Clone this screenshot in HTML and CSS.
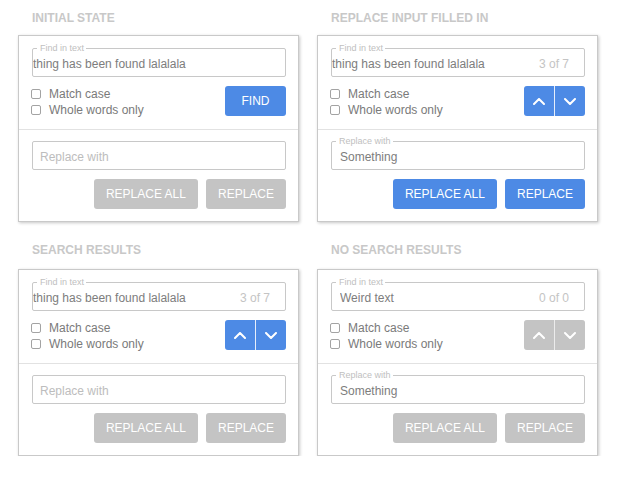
FILE: index.html
```html
<!DOCTYPE html>
<html lang="en">
<head>
<meta charset="utf-8">
<title>Find and replace states</title>
<link rel="stylesheet" href="styles.css">
</head>
<body>
<main class="board">
  <section class="state">
    <h2 class="state-title">INITIAL STATE</h2>
    <div class="card">
      <div class="card-find">
        <div class="field">
          <span class="field-label">Find in text</span>
          <span class="field-value field-value--clipped">thing has been found lalalala</span>
        </div>
        <div class="options">
          <ul class="checks">
            <li class="check"><span class="check-box"></span>Match case</li>
            <li class="check"><span class="check-box"></span>Whole words only</li>
          </ul>
          <button class="btn btn--primary btn--find">FIND</button>
        </div>
      </div>
      <div class="card-replace">
        <div class="field">
          <span class="field-placeholder">Replace with</span>
        </div>
        <div class="actions">
          <button class="btn btn--disabled">REPLACE ALL</button>
          <button class="btn btn--disabled">REPLACE</button>
        </div>
      </div>
    </div>
  </section>

  <section class="state">
    <h2 class="state-title">REPLACE INPUT FILLED IN</h2>
    <div class="card">
      <div class="card-find">
        <div class="field">
          <span class="field-label">Find in text</span>
          <span class="field-value field-value--clipped">thing has been found lalalala</span>
          <span class="field-count">3 of 7</span>
        </div>
        <div class="options">
          <ul class="checks">
            <li class="check"><span class="check-box"></span>Match case</li>
            <li class="check"><span class="check-box"></span>Whole words only</li>
          </ul>
          <div class="nav nav--primary">
            <button class="nav-btn" aria-label="Previous"><svg width="12" height="7" viewBox="0 0 12 7"><polyline points="1,6 6,1 11,6"/></svg></button>
            <button class="nav-btn" aria-label="Next"><svg width="12" height="7" viewBox="0 0 12 7"><polyline points="1,1 6,6 11,1"/></svg></button>
          </div>
        </div>
      </div>
      <div class="card-replace">
        <div class="field">
          <span class="field-label">Replace with</span>
          <span class="field-value">Something</span>
        </div>
        <div class="actions">
          <button class="btn btn--primary">REPLACE ALL</button>
          <button class="btn btn--primary">REPLACE</button>
        </div>
      </div>
    </div>
  </section>

  <section class="state state--lower">
    <h2 class="state-title">SEARCH RESULTS</h2>
    <div class="card">
      <div class="card-find">
        <div class="field">
          <span class="field-label">Find in text</span>
          <span class="field-value field-value--clipped">thing has been found lalalala</span>
          <span class="field-count">3 of 7</span>
        </div>
        <div class="options">
          <ul class="checks">
            <li class="check"><span class="check-box"></span>Match case</li>
            <li class="check"><span class="check-box"></span>Whole words only</li>
          </ul>
          <div class="nav nav--primary">
            <button class="nav-btn" aria-label="Previous"><svg width="12" height="7" viewBox="0 0 12 7"><polyline points="1,6 6,1 11,6"/></svg></button>
            <button class="nav-btn" aria-label="Next"><svg width="12" height="7" viewBox="0 0 12 7"><polyline points="1,1 6,6 11,1"/></svg></button>
          </div>
        </div>
      </div>
      <div class="card-replace">
        <div class="field">
          <span class="field-placeholder">Replace with</span>
        </div>
        <div class="actions">
          <button class="btn btn--disabled">REPLACE ALL</button>
          <button class="btn btn--disabled">REPLACE</button>
        </div>
      </div>
    </div>
  </section>

  <section class="state state--lower">
    <h2 class="state-title">NO SEARCH RESULTS</h2>
    <div class="card">
      <div class="card-find">
        <div class="field">
          <span class="field-label">Find in text</span>
          <span class="field-value">Weird text</span>
          <span class="field-count">0 of 0</span>
        </div>
        <div class="options">
          <ul class="checks">
            <li class="check"><span class="check-box"></span>Match case</li>
            <li class="check"><span class="check-box"></span>Whole words only</li>
          </ul>
          <div class="nav nav--disabled">
            <button class="nav-btn" aria-label="Previous"><svg width="12" height="7" viewBox="0 0 12 7"><polyline points="1,6 6,1 11,6"/></svg></button>
            <button class="nav-btn" aria-label="Next"><svg width="12" height="7" viewBox="0 0 12 7"><polyline points="1,1 6,6 11,1"/></svg></button>
          </div>
        </div>
      </div>
      <div class="card-replace">
        <div class="field">
          <span class="field-label">Replace with</span>
          <span class="field-value">Something</span>
        </div>
        <div class="actions">
          <button class="btn btn--disabled">REPLACE ALL</button>
          <button class="btn btn--disabled">REPLACE</button>
        </div>
      </div>
    </div>
  </section>
</main>
</body>
</html>
```
FILE: styles.css
```css
* { box-sizing: border-box; }

html, body {
  margin: 0;
  background: #ffffff;
}

body {
  font-family: "Liberation Sans", Arial, sans-serif;
  font-size: 12px;
  color: #7a7a7a;
}

.board {
  display: grid;
  grid-template-columns: 281px 281px;
  column-gap: 18px;
  row-gap: 20px;
  padding: 10px 0 0 18px;
}

.state-title {
  margin: 0 0 9px 14px;
  font-size: 12px;
  line-height: 16px;
  font-weight: bold;
  color: #c8c8c8;
}

.state--lower .state-title {
  margin-bottom: 11px;
}

.card {
  width: 281px;
  border: 1px solid #c9c9c9;
  background: #fff;
  box-shadow: 1px 1px 3px rgba(0, 0, 0, 0.22);
}

.card-find {
  padding: 12px 12px 13px 13px;
}

.card-replace {
  border-top: 1px solid #e2e2e2;
  padding: 11px 12px 12px 13px;
}

.field {
  position: relative;
  display: flex;
  align-items: center;
  height: 29px;
  border: 1px solid #c8c8c8;
  border-radius: 2px;
  padding: 0 15px 0 8px;
  font-size: 12px;
  line-height: 14px;
}

.field-label {
  position: absolute;
  left: 4px;
  top: -6px;
  padding: 0 2px 0 3px;
  background: #fff;
  font-size: 9px;
  line-height: 10px;
  color: #c0c0c0;
}

.field-value {
  flex: 1;
  white-space: nowrap;
  overflow: hidden;
  color: #7d7d7d;
  padding-top: 2px;
}

.field-value--clipped {
  margin-left: -8px;
}

.field-placeholder {
  flex: 1;
  color: #bdbdbd;
  padding-top: 2px;
  margin-left: -1px;
}

.field-count {
  color: #c4c4c4;
  padding-top: 2px;
}

.options {
  display: flex;
  justify-content: space-between;
  align-items: flex-start;
  margin-top: 9px;
  height: 30px;
}

.checks {
  list-style: none;
  margin: 0;
  padding: 0;
}

.check {
  display: flex;
  align-items: center;
  height: 16px;
  line-height: 16px;
  color: #7a7a7a;
}

.check-box {
  width: 10px;
  height: 10px;
  margin: 0 8px 0 -1px;
  border: 1px solid #a3a3a3;
  border-radius: 2px;
}

.btn {
  height: 30px;
  min-width: 61px;
  padding: 0 12px;
  border: none;
  border-radius: 3px;
  font-family: "Liberation Sans", Arial, sans-serif;
  font-size: 12px;
  color: #ffffff;
}

.btn--primary { background: #4d8ae5; }
.btn--disabled { background: #c4c4c4; }

.actions {
  display: flex;
  justify-content: flex-end;
  gap: 8px;
  margin-top: 9px;
}

.nav {
  display: flex;
  gap: 1px;
  height: 30px;
  border-radius: 3px;
  overflow: hidden;
  background: #e6eefb;
}

.nav--disabled { background: #ececec; }

.nav-btn {
  width: 30px;
  height: 30px;
  padding: 0;
  border: none;
  display: flex;
  align-items: center;
  justify-content: center;
}

.nav--primary .nav-btn { background: #4d8ae5; }
.nav--disabled .nav-btn { background: #c4c4c4; }

.nav-btn svg polyline {
  fill: none;
  stroke: #ffffff;
  stroke-width: 2;
  stroke-linecap: round;
  stroke-linejoin: round;
}
```
